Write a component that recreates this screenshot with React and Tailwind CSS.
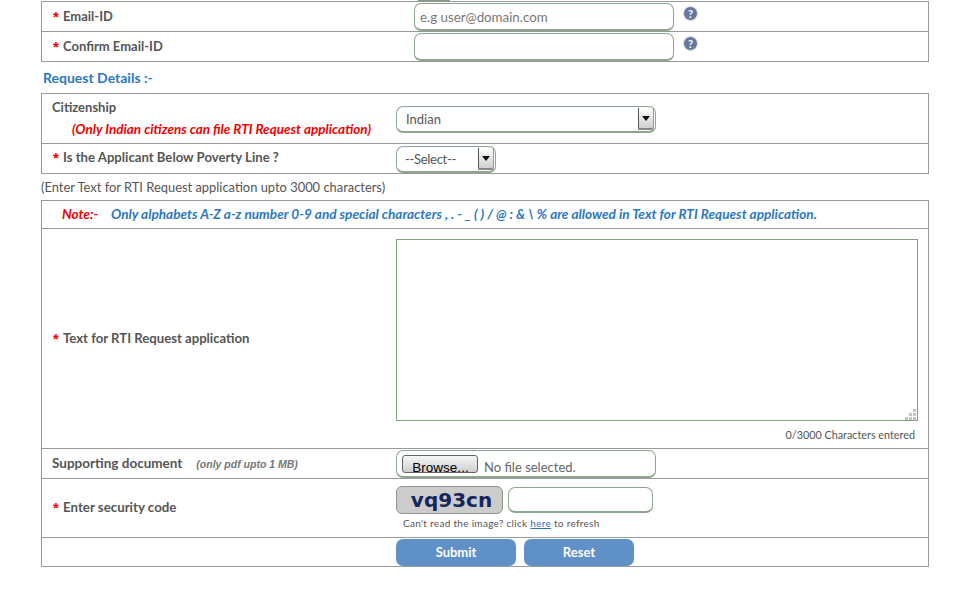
import React from 'react';

const Star = () => (
  <span className="inline-block w-[10px] h-[10px] align-[-1px] text-[#f00000] font-bold text-[15px] leading-[16px] font-['Liberation_Sans',sans-serif]">*</span>
);

const Help = () => (
  <span className="ml-[9px] mt-[4px] w-[15px] h-[15px] rounded-full bg-[#64789f] border border-[#e4e6ee] text-white text-[11px] font-bold leading-[13px] text-center shrink-0 self-start">?</span>
);

const Arrow = () => (
  <span className="w-[16px] self-stretch my-px mr-px flex items-center justify-center border-x border-[#555] border-r-[#999] border-b-2 border-b-[#888] rounded-r-[3px] bg-gradient-to-b from-white to-[#cfcfcf]">
    <svg width="8" height="5" viewBox="0 0 8 5"><path d="M0 0h8L4 5z" fill="#111" /></svg>
  </span>
);

const Row = ({ className = '', children }) => (
  <div className={`flex border-b border-[#999] ${className}`}>{children}</div>
);

const fieldBox = 'border border-b-2 border-[#8fa58f] rounded-[7px] bg-white';

export default function App() {
  return (
    <div className="w-[976px] h-[591px] overflow-hidden bg-white pl-[41px] font-['Lato','Noto_Sans',sans-serif] text-[13px] text-[#555]">
      <div className="w-[888px]">
        <div className="h-px ml-[377px] w-[32px] bg-[#8a9a8a]" />

        <div className="border border-b-0 border-[#999]">
          <Row className="h-[30px]">
            <div className="w-[372px] pl-[11px] pt-[6px] font-bold leading-[16px]"><Star />Email-ID</div>
            <input
              placeholder="e.g user@domain.com"
              className={`w-[260px] h-[28px] mt-px px-[5px] text-[13.3px] outline-none placeholder:text-[#777] ${fieldBox}`}
            />
            <Help />
          </Row>
          <Row className="h-[30px]">
            <div className="w-[372px] pl-[11px] pt-[6px] font-bold leading-[16px]"><Star />Confirm Email-ID</div>
            <input className={`w-[260px] h-[28px] mt-px px-[5px] text-[13.3px] outline-none ${fieldBox}`} />
            <Help />
          </Row>
        </div>

        <div className="h-[31px] pl-[2px] pt-[7px] text-[14px] font-bold leading-[17px] text-[#2b78c0]">Request Details :-</div>

        <div className="border border-b-0 border-[#999]">
          <Row className="h-[50px]">
            <div className="w-[354px] pl-[10px] pt-[5px]">
              <div className="font-bold leading-[16px]">Citizenship</div>
              <div className="mt-[6px] pl-[20px] italic font-bold text-[13.5px] leading-[16px] text-[#f00000]">(Only Indian citizens can file RTI Request application)</div>
            </div>
            <div className={`w-[260px] h-[27px] mt-[12px] flex items-center justify-between pl-[9px] ${fieldBox}`}>
              <span className="pt-[2px]">Indian</span>
              <Arrow />
            </div>
          </Row>
          <Row className="h-[30px]">
            <div className="w-[354px] pl-[11px] pt-[5px] font-bold text-[13.15px] leading-[16px]"><Star />Is the Applicant Below Poverty Line ?</div>
            <div className={`w-[100px] h-[27px] mt-[2px] flex items-center justify-between pl-[8px] tracking-[-0.3px] ${fieldBox}`}>
              <span className="pt-[2px]">--Select--</span>
              <Arrow />
            </div>
          </Row>
        </div>

        <div className="h-[26px] pt-[5px] leading-[17px] text-[12.9px]">(Enter Text for RTI Request application upto 3000 characters)</div>

        <div className="border border-b-0 border-[#999]">
          <Row className="h-[28px] items-center pl-[20px] italic font-bold text-[13.6px] text-[#2b78c0]">
            <span className="text-[#f00000] w-[49px]">Note:-</span>
            Only alphabets A-Z a-z number 0-9 and special characters , . - _ ( ) / @ : &amp; \ % are allowed in Text for RTI Request application.
          </Row>
          <Row className="h-[220px]">
            <div className="w-[354px] pl-[11px] self-center font-bold text-[13.15px] leading-[16px] pb-[1px]"><Star />Text for RTI Request application</div>
            <div className="w-[522px] pt-[10px]">
              <div className="relative h-[182px]">
                <textarea className="block w-full h-full border border-[#83a083] resize-none outline-none" />
                <svg className="absolute right-[1px] bottom-[1px]" width="13" height="12" viewBox="0 0 13 12" fill="#c4c4c4">
                  <rect x="9" y="1" width="3" height="3" />
                  <rect x="5" y="5" width="3" height="3" />
                  <rect x="9" y="5" width="3" height="3" />
                  <rect x="1" y="9" width="3" height="3" />
                  <rect x="5" y="9" width="3" height="3" />
                  <rect x="9" y="9" width="3" height="3" />
                </svg>
              </div>
              <div className="mt-[6px] pr-[3px] text-right text-[10.8px] leading-[16px]">0/3000 Characters entered</div>
            </div>
          </Row>
          <Row className="h-[30px]">
            <div className="w-[354px] pl-[10px] pt-[6px] leading-[16px] flex items-baseline">
              <span className="font-bold text-[13.5px]">Supporting document</span>
              <span className="ml-[14px] text-[10.5px] italic font-bold text-[#777] font-['Liberation_Sans',sans-serif]">(only pdf upto 1 MB)</span>
            </div>
            <div className={`w-[260px] h-[28px] mt-[1px] flex pl-[5px] ${fieldBox}`}>
              <span className="w-[76px] h-[18px] mt-[4px] overflow-hidden border border-[#666] rounded-[3px] bg-gradient-to-b from-[#f6f6f6] to-[#cfcfcf] text-center text-black text-[13.5px] leading-[24px] pl-px font-['Liberation_Sans',sans-serif]">Browse...</span>
              <span className="ml-[6px] mt-[7px] leading-[18px] text-[#666]">No file selected.</span>
            </div>
          </Row>
          <Row className="h-[59px]">
            <div className="w-[354px] pl-[11px] pt-[20px] font-bold text-[13.3px] leading-[16px]"><Star />Enter security code</div>
            <div className="pt-[7px]">
              <div className="flex items-center gap-[5px]">
                <span className="w-[107px] h-[28px] pl-[4px] rounded-[6px] border border-[#8a9a8a] bg-[#cccccc] text-center font-['DejaVu_Sans',sans-serif] font-bold text-[20px] leading-[27px] text-[#14265c]">vq93cn</span>
                <input className={`w-[145px] h-[26px] px-[5px] outline-none ${fieldBox}`} />
              </div>
              <div className="mt-[2px] pl-[7px] text-[10px] leading-[14px] tracking-[0.3px]">
                Can't read the image? click <a className="underline text-[#2b78c0]">here</a> to refresh
              </div>
            </div>
          </Row>
          <Row className="h-[29px]">
            <div className="w-[354px]" />
            <div className="flex gap-[8px] pt-px">
              <button className="w-[120px] h-[27px] rounded-[7px] bg-[#5f90c8] text-white font-bold text-[13px]">Submit</button>
              <button className="w-[110px] h-[27px] rounded-[7px] bg-[#5f90c8] text-white font-bold text-[13px]">Reset</button>
            </div>
          </Row>
        </div>
      </div>
    </div>
  );
}
